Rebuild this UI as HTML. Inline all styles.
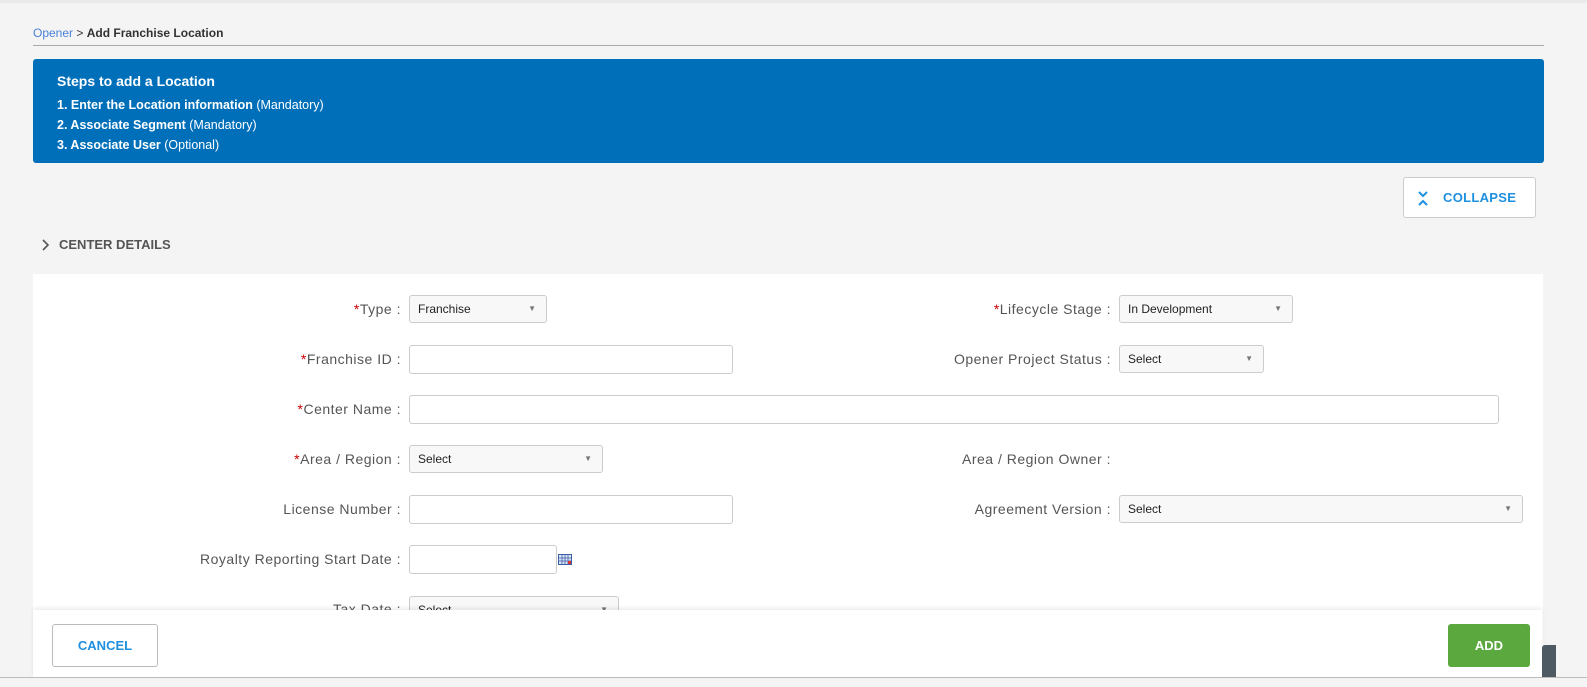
<!DOCTYPE html>
<html><head><style>
*{box-sizing:border-box;margin:0;padding:0}
body{width:1587px;height:687px;background:#f4f4f4;font-family:"Liberation Sans",sans-serif;position:relative;overflow:hidden}
.a{position:absolute}
.lbl{position:absolute;font-size:14px;letter-spacing:.5px;color:#555;text-align:right;white-space:nowrap}
.lbl b{color:#c00;font-weight:normal}
.in{position:absolute;background:#fff;border:1px solid #ccc;border-radius:3px;height:29px}
.sel{position:absolute;background:#f8f8f8;border:1px solid #ccc;border-radius:3px;height:28px;font-size:12px;color:#222;padding:6px 8px}
.sel:after{content:"▼";position:absolute;right:10px;top:8px;font-size:8px;color:#777}
</style></head><body>
<div class="a" style="left:0;top:0;width:1587px;height:3px;background:#eaeaea"></div>
<div class="a" style="left:33px;top:26px;font-size:12px;color:#333"><span style="color:#4a7fd6">Opener</span> &gt; <b>Add Franchise Location</b></div>
<div class="a" style="left:33px;top:45px;width:1511px;height:1px;background:#aaa"></div>
<div class="a" style="left:33px;top:59px;width:1511px;height:104px;background:#006fba;border-radius:3px;color:#fff;font-size:12.5px;padding:12px 24px;line-height:20px">
<div style="font-size:14px;font-weight:bold;margin-bottom:4px">Steps to add a Location</div>
<div><b>1. Enter the Location information</b> (Mandatory)</div>
<div><b>2. Associate Segment</b> (Mandatory)</div>
<div><b>3. Associate User</b> (Optional)</div></div>
<div class="a" style="left:1403px;top:177px;width:133px;height:41px;background:#fff;border:1px solid #ccc;border-radius:3px;color:#1e90e0;font-size:13px;font-weight:bold;padding:12px 0 0 39px;letter-spacing:.3px">COLLAPSE</div>
<svg class="a" style="left:1417px;top:191px" width="12" height="15"><path d="M2 1l4 4 4-4M2 14l4-4 4 4" stroke="#1e90e0" stroke-width="2" fill="none"/></svg>
<svg class="a" style="left:41px;top:239px" width="10" height="12"><path d="M2 1l5 5-5 5" stroke="#555" stroke-width="1.6" fill="none"/></svg>
<div class="a" style="left:59px;top:237px;font-size:13px;font-weight:bold;color:#555">CENTER DETAILS</div>
<div class="a" style="left:33px;top:274px;width:1510px;height:410px;background:#fff"></div>

<div class="lbl" style="right:1186px;top:301px"><b>*</b>Type :</div>
<div class="sel" style="left:409px;top:295px;width:138px">Franchise</div>
<div class="lbl" style="right:476px;top:301px"><b>*</b>Lifecycle Stage :</div>
<div class="sel" style="left:1119px;top:295px;width:174px">In Development</div>

<div class="lbl" style="right:1186px;top:351px"><b>*</b>Franchise ID :</div>
<div class="in" style="left:409px;top:345px;width:324px"></div>
<div class="lbl" style="right:476px;top:351px">Opener Project Status :</div>
<div class="sel" style="left:1119px;top:345px;width:145px">Select</div>

<div class="lbl" style="right:1186px;top:401px"><b>*</b>Center Name :</div>
<div class="in" style="left:409px;top:395px;width:1090px"></div>

<div class="lbl" style="right:1186px;top:451px"><b>*</b>Area / Region :</div>
<div class="sel" style="left:409px;top:445px;width:194px">Select</div>
<div class="lbl" style="right:476px;top:451px">Area / Region Owner :</div>

<div class="lbl" style="right:1186px;top:501px">License Number :</div>
<div class="in" style="left:409px;top:495px;width:324px"></div>
<div class="lbl" style="right:476px;top:501px">Agreement Version :</div>
<div class="sel" style="left:1119px;top:495px;width:404px">Select</div>

<div class="lbl" style="right:1186px;top:551px">Royalty Reporting Start Date :</div>
<div class="in" style="left:409px;top:545px;width:148px"></div>
<svg class="a" style="left:558px;top:554px" width="14" height="11"><rect x=".5" y=".5" width="13" height="10" fill="#dde6f5" stroke="#3b5ea8"/><path d="M0 4h14M0 7h14M4 0v11M7 0v11M10 0v11" stroke="#3b5ea8" stroke-width=".8"/><rect x="10" y="7" width="3" height="3" fill="#d33"/></svg>

<div class="lbl" style="right:1186px;top:601px">Tax Date :</div>
<div class="sel" style="left:409px;top:596px;width:210px">Select</div>

<div class="a" style="left:33px;top:610px;width:1509px;height:67px;background:#fff;box-shadow:0 -2px 4px rgba(0,0,0,.08)"></div>
<div class="a" style="left:52px;top:624px;width:106px;height:43px;border:1px solid #bbb;border-radius:3px;color:#1e90e0;font-size:13px;font-weight:bold;text-align:center;line-height:41px;background:#fff">CANCEL</div>
<div class="a" style="left:1448px;top:624px;width:82px;height:43px;background:#5ba83f;border-radius:3px;color:#fff;font-size:13px;font-weight:bold;text-align:center;line-height:43px">ADD</div>
<div class="a" style="left:1542px;top:645px;width:14px;height:32px;background:#4d5a63;border-radius:3px 0 0 0"></div>
<div class="a" style="left:0;top:677px;width:1587px;height:10px;background:#f4f4f4;border-top:1px solid #bbb"></div>
</body></html>
